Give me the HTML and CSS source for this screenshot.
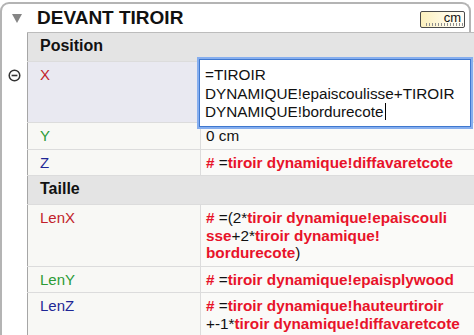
FILE: index.html
```html
<!DOCTYPE html>
<html>
<head>
  <title>Devant tiroir</title>
  <link rel="stylesheet" href="styles.css">
</head>
<body>
  <div class="panel">
    <div class="panel-head">
      <span class="disclosure"></span>
      <h1 class="title">DEVANT TIROIR</h1>
      <button class="unit">cm</button>
    </div>

    <div class="panel-body">
      <div class="gutter">
        <svg class="collapse" width="13" height="13" viewBox="0 0 13 13">
          <circle cx="6.5" cy="6.5" r="5.3" fill="#fff" stroke="#333" stroke-width="1.5"/>
          <line x1="3.6" y1="6.5" x2="9.4" y2="6.5" stroke="#333" stroke-width="1.6"/>
        </svg>
      </div>

      <table class="props">
        <colgroup>
          <col class="col-name">
          <col>
        </colgroup>
        <tr class="group">
          <td colspan="2">Position</td>
        </tr>
        <tr class="selected">
          <td class="name red">X</td>
          <td class="value editing">
            <div class="editor">=TIROIR<br>DYNAMIQUE!epaiscoulisse+TIROIR<br>DYNAMIQUE!bordurecote<span class="caret"></span></div>
          </td>
        </tr>
        <tr>
          <td class="name green">Y</td>
          <td class="value">0 cm</td>
        </tr>
        <tr>
          <td class="name blue">Z</td>
          <td class="value"><b class="ref">#</b> =<b class="ref">tiroir dynamique!diffavaretcote</b></td>
        </tr>
        <tr class="group">
          <td colspan="2">Taille</td>
        </tr>
        <tr>
          <td class="name red">LenX</td>
          <td class="value"><b class="ref">#</b> =(2*<b class="ref">tiroir dynamique!epaiscouli<br>sse</b>+2*<b class="ref">tiroir dynamique!<br>bordurecote</b>)</td>
        </tr>
        <tr>
          <td class="name green">LenY</td>
          <td class="value"><b class="ref">#</b> =<b class="ref">tiroir dynamique!epaisplywood</b></td>
        </tr>
        <tr>
          <td class="name blue">LenZ</td>
          <td class="value"><b class="ref">#</b> =<b class="ref">tiroir dynamique!hauteurtiroir</b><br>+-1*<b class="ref">tiroir dynamique!diffavaretcote</b></td>
        </tr>
      </table>
    </div>
  </div>
</body>
</html>
```

FILE: styles.css
```css
body {
  font-family: "Liberation Sans", Arial, sans-serif;
  margin: 0;
  padding: 0;
  background-color: #fff;
  overflow: hidden;
}

.panel {
  margin: 2px 3px 0 0;
  border: 2px solid #b4b4b4;
  border-bottom: none;
  border-radius: 9px 9px 0 0;
  height: 340px;
}

.panel-head {
  display: flex;
  align-items: center;
  height: 28px;
}

.disclosure {
  width: 0;
  height: 0;
  margin: 1px 0 0 10px;
  border-left: 5px solid transparent;
  border-right: 5px solid transparent;
  border-top: 9px solid #858585;
}

.title {
  margin: 0 0 0 15px;
  font-size: 19px;
  font-weight: bold;
  color: #111;
  flex: 1;
}

.unit {
  width: 45px;
  height: 17px;
  margin: 3px 4px 0 0;
  padding: 0 3px 4px 0;
  border: 1px solid #4a4a4a;
  border-radius: 2px;
  background:
    repeating-linear-gradient(to right, #8f8f8f 0, #8f8f8f 1px, transparent 1px, transparent 3px) left 5px bottom 1px / 37px 3px no-repeat,
    linear-gradient(to right, #fcf0bd, #fffae4 55%, #fffdf6);
  font-family: "Liberation Sans", Arial, sans-serif;
  font-size: 13px;
  line-height: 11px;
  color: #111;
  text-align: right;
}

.panel-body {
  display: flex;
  align-items: flex-start;
}

.gutter {
  width: 25px;
  padding-top: 37px;
}

.collapse {
  display: block;
  margin-left: 6px;
}

.props {
  flex: 1;
  margin-right: -6px;
  border-collapse: collapse;
  table-layout: fixed;
  font-size: 15px;
  line-height: 17.5px;
  color: #111;
}

.col-name {
  width: 173px;
}

.props td {
  border: 1px solid #dcdcdc;
  vertical-align: top;
}

.props tr:first-child td {
  border-top-color: #bcbcbc;
}

.props td:first-child {
  border-left-color: #a6a6a6;
}

.group td {
  background-color: #e4e4e4;
  padding: 4px 12px 6px;
  font-size: 16px;
  line-height: 18px;
  font-weight: bold;
  border-left-color: #a6a6a6;
}

.name {
  padding: 4px 12px 4px;
  background-color: #f8f8f5;
}

.value {
  padding: 4px 5px 4px;
  font-size: 15.3px;
  background-color: #fafaf8;
}

.selected td {
  background-color: #e9e9f1;
  height: 52px;
}

.editing {
  position: relative;
}

.editor {
  position: absolute;
  top: -3px;
  left: -2px;
  right: 3px;
  bottom: -5px;
  padding: 6px 4px 0 5px;
  line-height: 18.5px;
  background-color: #fff;
  border: 1px solid #3f78cf;
  box-shadow: 0 0 0 2px #86aeee;
  z-index: 1;
}

.caret {
  display: inline-block;
  width: 0;
  height: 17px;
  margin-left: 1px;
  border-left: 1px solid #000;
  vertical-align: -3px;
}

.red {
  color: #c21f2c;
}

.green {
  color: #2c9b37;
}

.blue {
  color: #1f2796;
}

.ref {
  color: #e8132a;
}
```
